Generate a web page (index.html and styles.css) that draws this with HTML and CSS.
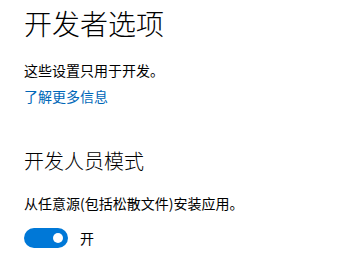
FILE: index.html
```html
<!DOCTYPE html>
<html lang="zh-CN">
  <head>
    <meta charset="UTF-8" />
    <title>开发者选项</title>
    <link rel="stylesheet" href="styles.css">
  </head>
  <body>
    <div class="page">
      <h1 class="title">开发者选项</h1>
      <p class="desc">这些设置只用于开发。</p>
      <a class="link" href="#">了解更多信息</a>

      <h2 class="subtitle">开发人员模式</h2>
      <p class="desc desc-small-gap">从任意源(包括松散文件)安装应用。</p>
      <div class="toggle-row">
        <span class="toggle"><span class="knob"></span></span>
        <span class="toggle-label">开</span>
      </div>
    </div>
  </body>
</html>
```

FILE: styles.css
```css
body {
  margin: 0;
  background-color: #ffffff;
  font-family: "Noto Sans CJK SC", "Noto Sans", sans-serif;
  color: #000000;
}

.page {
  padding: 6px 24px 0 24px;
}

.title {
  margin: 0;
  font-size: 28px;
  font-weight: 300;
  line-height: 34px;
}

.desc {
  margin: 20px 0 0 0;
  font-size: 14px;
  line-height: 20px;
}

.desc-small-gap {
  margin-top: 18px;
}

.link {
  display: block;
  margin-top: 6px;
  font-size: 14px;
  line-height: 20px;
  color: #0067b8;
  text-decoration: none;
}

.subtitle {
  margin: 41px 0 0 0;
  font-size: 20px;
  font-weight: 300;
  line-height: 28px;
}

.toggle-row {
  display: flex;
  align-items: center;
  gap: 12px;
  margin-top: 15px;
}

.toggle {
  display: flex;
  align-items: center;
  justify-content: flex-end;
  width: 44px;
  height: 20px;
  border-radius: 10px;
  background-color: #0078d7;
  padding: 0 5px;
  box-sizing: border-box;
}

.knob {
  width: 10px;
  height: 10px;
  border-radius: 50%;
  background-color: #ffffff;
}

.toggle-label {
  font-size: 14px;
  line-height: 20px;
}
```
